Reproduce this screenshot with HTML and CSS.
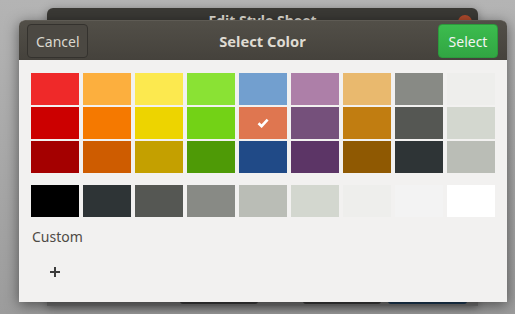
FILE: index.html
```html
<!DOCTYPE html>
<html lang="en">
<head>
    <meta charset="UTF-8">
    <meta name="viewport" content="width=device-width, initial-scale=1.0">
    <title>Select Color</title>
    <link rel="stylesheet" href="styles.css">
</head>
<body>
    <div class="desktop">
        <div class="window">
            <div class="window-title">
                <span>Edit Style Sheet</span>
                <span class="close"></span>
            </div>
            <div class="window-body">
                <div class="window-buttons">
                    <span class="wbtn"></span>
                    <span class="wbtn wbtn-2"></span>
                    <span class="wbtn wbtn-blue"></span>
                </div>
            </div>
        </div>

        <div class="dialog">
            <div class="header">
                <button class="btn btn-cancel">Cancel</button>
                <div class="title">Select Color</div>
                <button class="btn btn-select">Select</button>
            </div>
            <div class="content">
                <div class="palette" id="palette"></div>
                <div class="palette grays" id="grays"></div>
                <div class="label">Custom</div>
                <button class="add">
                    <svg width="10" height="10" viewBox="0 0 10 10"><path d="M5 0v10M0 5h10" stroke="#3c3c3c" stroke-width="2"/></svg>
                </button>
            </div>
        </div>
    </div>

    <script>
        const cores = [
            '#ef2929', '#fcaf3e', '#fce94f', '#8ae234', '#729fcf', '#ad7fa8', '#e9b96e', '#888a85', '#eeeeec',
            '#cc0000', '#f57900', '#edd400', '#73d216', '#df7650', '#75507b', '#c17d11', '#555753', '#d3d7cf',
            '#a40000', '#ce5c00', '#c4a000', '#4e9a06', '#204a87', '#5c3566', '#8f5902', '#2e3436', '#babdb6'
        ];
        const cinzas = ['#000000', '#2e3436', '#555753', '#888a85', '#babdb6', '#d3d7cf', '#eeeeec', '#f3f3f3', '#ffffff'];
        const check = '<svg width="12" height="10" viewBox="0 0 12 10"><path d="M1.5 5.2 L4.6 8.2 L10.6 1.6" fill="none" stroke="#fff" stroke-width="2.6"/></svg>';

        function montar(id, lista, marcada) {
            document.getElementById(id).innerHTML = lista.map((cor, i) => `
                <div class="swatch" style="background:${cor}">${i === marcada ? check : ''}</div>
            `).join('');
        }

        montar('palette', cores, 13);
        montar('grays', cinzas, -1);
    </script>
</body>
</html>
```

FILE: styles.css
```css
* { box-sizing: border-box; margin: 0; padding: 0; }
body { width: 515px; height: 314px; overflow: hidden; background: linear-gradient(#b4b4b4, #9c9c9c); font-family: "Noto Sans", "DejaVu Sans", sans-serif; }
.desktop { position: relative; width: 515px; height: 314px; }

/* janela de fundo */
.window { position: absolute; left: 47px; top: 8px; width: 431px; height: 298px; display: flex; flex-direction: column; box-shadow: 0 2px 10px rgba(0,0,0,0.35); border-radius: 6px 6px 0 0; }
.window-title { height: 30px; background: #3a3935; border-radius: 6px 6px 0 0; color: #dfdbd2; font-weight: bold; font-size: 14px; line-height: 17px; padding: 4px 6px 0; text-align: center; position: relative; }
.close { position: absolute; right: 6px; top: 7px; width: 14px; height: 14px; border-radius: 50%; background: #b04a2c; }
.window-body { flex: 1; background: #727272; display: flex; align-items: flex-end; }
.window-buttons { display: flex; padding: 0 0 2px 133px; }
.wbtn { width: 78px; height: 3px; background: #3c3c3c; border-radius: 0 0 3px 3px; }
.wbtn-2 { margin-left: 45px; }
.wbtn-blue { margin-left: 7px; width: 79px; background: #1e3a55; }

/* dialogo */
.dialog { position: absolute; left: 19px; top: 20px; width: 488px; height: 282px; background: #f2f1f0; border-radius: 6px 6px 0 0; box-shadow: 0 3px 14px rgba(0,0,0,0.5); display: flex; flex-direction: column; }
.header { height: 40px; padding: 3px 9px 3px 8px; display: grid; grid-template-columns: 1fr auto 1fr; align-items: center; background: linear-gradient(#524f48, #45423c); border-top: 1px solid #5e5b54; border-radius: 6px 6px 0 0; }
.title { color: #dfdbd2; font-weight: bold; font-size: 14.7px; }
.btn { height: 34px; padding: 0 8px; border-radius: 4px; font-family: inherit; font-size: 14px; cursor: pointer; }
.btn-cancel { justify-self: start; background: #4b4842; border: 1px solid #34322e; color: #dcd8cf; width: 61px; }
.btn-select { justify-self: end; background: linear-gradient(#3cbc4e, #31a643); border: 1px solid #2c9a3c; color: #f4f4f4; width: 60px; }

.content { padding: 13px 12px 0; }
.palette { display: grid; grid-template-columns: repeat(9, 48px); column-gap: 4px; row-gap: 2px; }
.grays { margin-top: 12px; }
.swatch { height: 32px; display: flex; align-items: center; justify-content: center; }
.label { margin-top: 10px; padding-left: 1px; font-size: 14px; line-height: 19px; color: #4e4a45; }
.add { margin-top: 10px; width: 48px; height: 32px; border: none; background: transparent; display: flex; align-items: center; justify-content: center; }
```
